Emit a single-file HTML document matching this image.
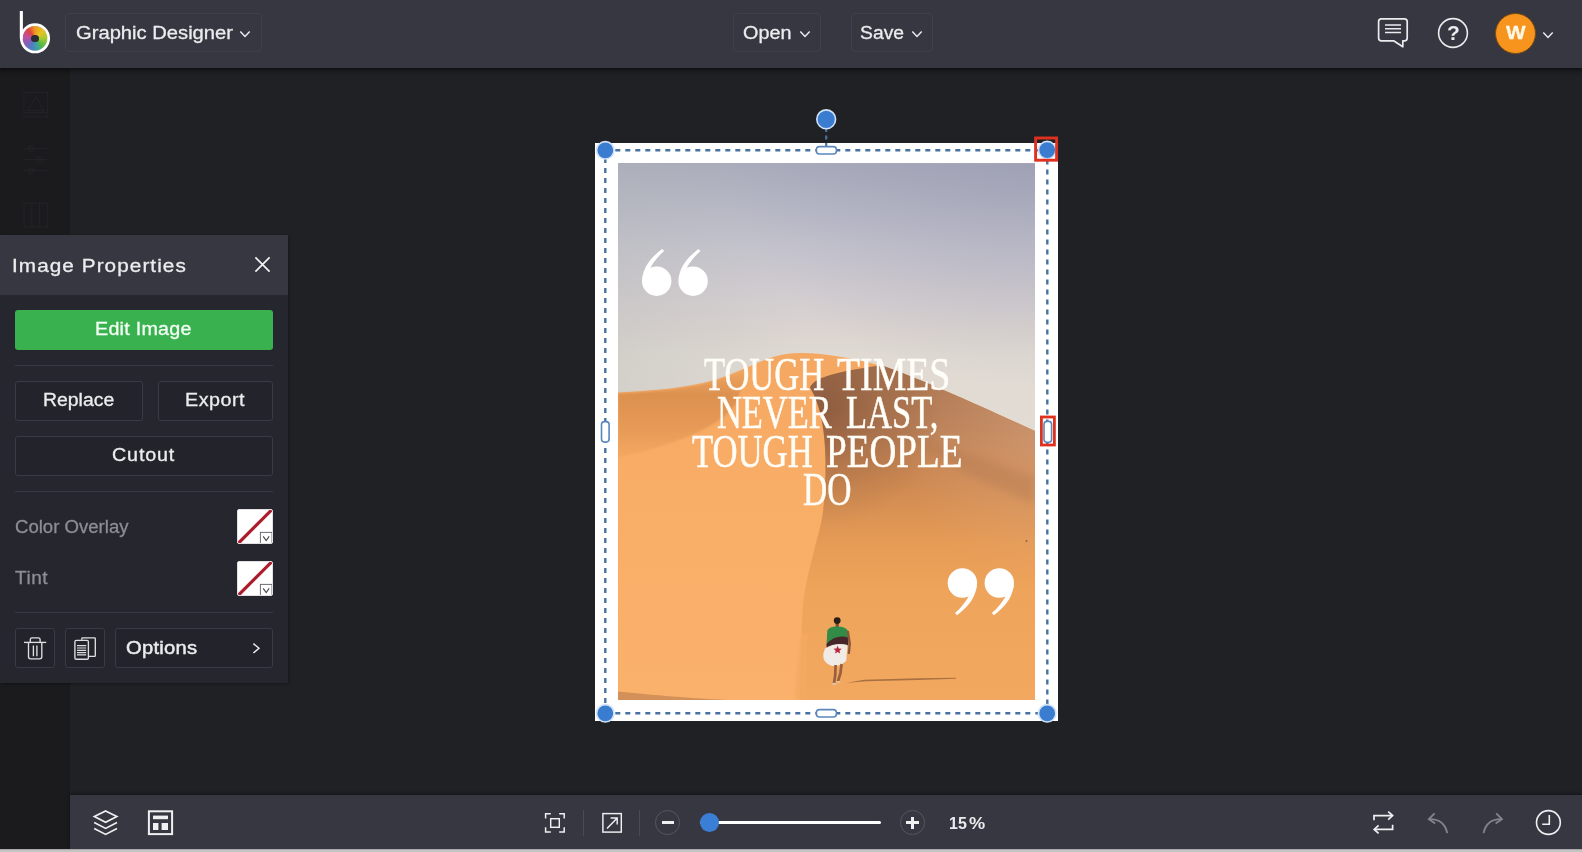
<!DOCTYPE html>
<html>
<head>
<meta charset="utf-8">
<title>Graphic Designer</title>
<style>
*{box-sizing:border-box;margin:0;padding:0}
html,body{width:1582px;height:852px;overflow:hidden;background:#202125;font-family:"Liberation Sans",sans-serif;}
.abs{position:absolute}
#header{position:absolute;left:0;top:0;width:1582px;height:68px;background:#373741;box-shadow:0 1px 5px 1px rgba(8,8,14,.85);z-index:5}
#sidebar{position:absolute;left:0;top:68px;width:70px;height:781px;background:#1b1b1d;z-index:1}
#toolbar{position:absolute;left:70px;top:795px;width:1512px;height:54px;background:#373741;z-index:4;box-shadow:0 -1px 3px rgba(10,10,14,.6)}
#strip{position:absolute;left:0;top:849px;width:1582px;height:3px;background:linear-gradient(#9c9ca0,#c2c2c2 45%,#c6c6c6);z-index:6}
.hbtn{position:absolute;top:13px;height:39px;border:1px solid #40404b;border-radius:4px;background:#373741}
.t{position:absolute;white-space:pre;color:#ececef;transform-origin:0 50%;line-height:1;-webkit-text-stroke:.3px}
#panel{position:absolute;left:0;top:235px;width:288px;height:448px;background:#25262e;z-index:3;box-shadow:1px 1px 3px rgba(0,0,0,.3)}
#phead{position:absolute;left:0;top:0;width:288px;height:60px;background:#373741}
.pbtn{position:absolute;border:1px solid #3a3a45;border-radius:3px;background:#23242b}
.hr{position:absolute;left:15px;width:258px;height:1px;background:#383944}
.sw{position:absolute;left:237.3px;width:35.4px;height:35.4px;background:#fff;border:1px solid #e4dfe2;border-radius:2px;overflow:hidden}
</style>
</head>
<body>
<div id="sidebar">
<svg class="abs" style="left:0;top:0" width="70" height="180" viewBox="0 68 70 180" fill="none" stroke="#222226" stroke-width="1.2">
<rect x="24" y="92.4" width="23.4" height="24.4"/><path d="M24 112.6 H47.4 M27.6 110.5 L35.7 97 L43.8 110.5 Z"/>
<path d="M24 148.5 H47.4 M24 159.5 H47.4 M24 170.5 H47.4"/><circle cx="31" cy="148.5" r="2.6"/><circle cx="39.5" cy="159.5" r="2.6"/><circle cx="31" cy="170.5" r="2.6"/>
<rect x="24" y="203.2" width="23.4" height="23.6"/><path d="M31.8 203.2 V226.8 M39.6 203.2 V226.8"/>
</svg></div>
<div id="header">
<!-- logo -->
<div class="abs" style="left:22.4px;top:25.6px;width:25.2px;height:25.2px;border-radius:50%;background:conic-gradient(from 0deg,#ee9a22 0deg,#e6c422 45deg,#a5c92f 90deg,#56b848 135deg,#3f9fa8 170deg,#4c7fc4 200deg,#8a5cb8 245deg,#c44f9a 285deg,#e0453c 325deg,#ee9a22 360deg)"></div>
<div class="abs" style="left:31.3px;top:35px;width:7.4px;height:7.4px;border-radius:50%;background:#2c2c33"></div>
<svg class="abs" style="left:0;top:0" width="70" height="68" viewBox="0 0 70 68"><circle cx="35" cy="38.3" r="13.7" fill="none" stroke="#fff" stroke-width="2.7"/><path d="M21.35 11 V38.5" stroke="#fff" stroke-width="3.1" fill="none"/></svg>
<!-- Graphic Designer -->
<div class="hbtn" style="left:65px;width:197px"></div>
<span class="t" id="tGD" style="left:76.0px;top:24.2px;font-size:18.58px;transform:scaleX(1.086)">Graphic Designer</span>
<svg class="abs" style="left:239px;top:29px" width="12" height="9" viewBox="0 0 12 9"><path d="M1.3 2.4 L6 7.4 L10.7 2.4" fill="none" stroke="#ececef" stroke-width="1.45"/></svg>
<!-- Open -->
<div class="hbtn" style="left:732.5px;width:88px"></div>
<span class="t" id="tOpen" style="left:743.1px;top:24.2px;font-size:18.58px;transform:scaleX(1.065)">Open</span>
<svg class="abs" style="left:798.5px;top:29px" width="12" height="9" viewBox="0 0 12 9"><path d="M1.3 2.4 L6 7.4 L10.7 2.4" fill="none" stroke="#ececef" stroke-width="1.45"/></svg>
<!-- Save -->
<div class="hbtn" style="left:850.5px;width:82px"></div>
<span class="t" id="tSave" style="left:860.3px;top:24.2px;font-size:18.58px;transform:scaleX(1.04)">Save</span>
<svg class="abs" style="left:911px;top:29px" width="12" height="9" viewBox="0 0 12 9"><path d="M1.3 2.4 L6 7.4 L10.7 2.4" fill="none" stroke="#ececef" stroke-width="1.45"/></svg>
<!-- chat icon -->
<svg class="abs" style="left:1374px;top:14px" width="40" height="38" viewBox="0 0 40 38"><path d="M7.4 4.8 H30.4 Q33.2 4.8 33.2 7.6 V24 Q33.2 26.8 30.4 26.8 H28.8 V32.8 L19.6 26.8 H7.4 Q4.6 26.8 4.6 24 V7.6 Q4.6 4.8 7.4 4.8 Z" fill="none" stroke="#ececef" stroke-width="1.7" stroke-linejoin="round"/><path d="M11 10.9 H27 M11 14.7 H27 M11 18.4 H27" stroke="#ececef" stroke-width="1.5" fill="none"/></svg>
<!-- help -->
<svg class="abs" style="left:1436px;top:16px" width="34" height="34" viewBox="0 0 34 34"><circle cx="17" cy="17" r="14.4" fill="none" stroke="#ececef" stroke-width="1.6"/></svg>
<span class="t" style="left:1447.1px;top:22.9px;font-size:20.5px;font-weight:700;-webkit-text-stroke:0;transform:scaleX(1.02)">?</span>
<!-- avatar -->
<div class="abs" style="left:1495.3px;top:12.6px;width:41.2px;height:41.2px;border-radius:50%;background:#f7941d;border:1.5px solid #7a4a12"></div>
<span class="t" style="left:1505.9px;top:24.3px;font-size:18.2px;font-weight:700;color:#fff8e8;transform:scaleX(1.14)">W</span>
<svg class="abs" style="left:1542px;top:29.6px" width="12" height="9" viewBox="0 0 12 9"><path d="M1.3 2.4 L6 7.4 L10.7 2.4" fill="none" stroke="#ececef" stroke-width="1.45"/></svg>
</div>
<div id="panel"><div id="phead"></div>
<span class="t" style="left:12.4px;top:22.2px;font-size:18.02px;letter-spacing:0.93px;transform:scaleX(1.150)">Image Properties</span>
<svg class="abs" style="left:253px;top:20px" width="19" height="19" viewBox="0 0 19 19"><path d="M2.4 2.4 L16.6 16.6 M16.6 2.4 L2.4 16.6" stroke="#f2f2f4" stroke-width="1.7" fill="none"/></svg>
<div class="abs" style="left:15px;top:75px;width:258px;height:40px;border-radius:3px;background:#3ab14f"></div>
<span class="t" style="left:94.9px;top:86.3px;font-size:17.6px;letter-spacing:0.22px;transform:scaleX(1.120);color:#f3fff4">Edit Image</span>
<div class="hr" style="top:130px"></div>
<div class="pbtn" style="left:15px;top:146px;width:128px;height:40px"></div>
<span class="t" style="left:42.6px;top:156.5px;font-size:17.6px;letter-spacing:0px;transform:scaleX(1.103)">Replace</span>
<div class="pbtn" style="left:158px;top:146px;width:115px;height:40px"></div>
<span class="t" style="left:184.9px;top:156.5px;font-size:17.6px;letter-spacing:0.47px;transform:scaleX(1.120)">Export</span>
<div class="pbtn" style="left:15px;top:201px;width:258px;height:40px"></div>
<span class="t" style="left:112.3px;top:211.5px;font-size:17.6px;letter-spacing:0.76px;transform:scaleX(1.120)">Cutout</span>
<div class="hr" style="top:256px"></div>
<span class="t" style="left:14.7px;top:282.9px;font-size:18.02px;transform:scaleX(1.031);color:#8d8d93">Color Overlay</span>
<div class="sw" style="top:273.8px"><svg class="abs" style="left:-1px;top:-1px" width="36" height="36" viewBox="0 0 36 36"><path d="M0 35.6 L35.6 0" stroke="#ab1d2d" stroke-width="3.2"/><rect x="23.4" y="23.4" width="11.6" height="11.6" fill="#fff" stroke="#6a6e74" stroke-width="1"/><path d="M26.2 27.4 L29.2 31.6 L32.2 27.4" fill="none" stroke="#444" stroke-width="1.1"/></svg></div>
<span class="t" style="left:14.7px;top:335.4px;font-size:17.6px;letter-spacing:0.47px;transform:scaleX(1.080);color:#8d8d93">Tint</span>
<div class="sw" style="top:325.6px"><svg class="abs" style="left:-1px;top:-1px" width="36" height="36" viewBox="0 0 36 36"><path d="M0 35.6 L35.6 0" stroke="#ab1d2d" stroke-width="3.2"/><rect x="23.4" y="23.4" width="11.6" height="11.6" fill="#fff" stroke="#6a6e74" stroke-width="1"/><path d="M26.2 27.4 L29.2 31.6 L32.2 27.4" fill="none" stroke="#444" stroke-width="1.1"/></svg></div>
<div class="hr" style="top:377px"></div>
<div class="pbtn" style="left:15px;top:393px;width:40px;height:40px"></div>
<div class="pbtn" style="left:65px;top:393px;width:40px;height:40px"></div>
<div class="pbtn" style="left:115px;top:393px;width:158px;height:40px"></div>
<span class="t" style="left:125.7px;top:403.7px;font-size:18.02px;letter-spacing:0.22px;transform:scaleX(1.120);-webkit-text-stroke:.45px">Options</span>
<svg class="abs" style="left:249px;top:406px" width="14" height="14" viewBox="0 0 14 14"><path d="M4.4 2.6 L10 7.3 L4.4 12" fill="none" stroke="#ececef" stroke-width="1.45"/></svg>
<!-- trash -->
<svg class="abs" style="left:22px;top:400px" width="26" height="26" viewBox="0 0 26 26" fill="none" stroke="#dedee2" stroke-width="1.35"><path d="M2 7.4 H24.2"/><path d="M8.3 7.2 V4.6 Q8.3 2.9 10 2.9 H16.4 Q18.1 2.9 18.1 4.6 V7.2"/><path d="M6.5 7.6 V21.8 Q6.5 23.9 8.6 23.9 H17.7 Q19.8 23.9 19.8 21.8 V7.6"/><path d="M11.4 10.6 V21.2 M14.9 10.6 V21.2"/></svg>
<!-- copy -->
<svg class="abs" style="left:72px;top:400px" width="26" height="26" viewBox="0 0 26 26" fill="none" stroke="#dedee2" stroke-width="1.35"><path d="M9.8 4.8 V3.6 Q9.8 2.9 10.5 2.9 H22.6 Q23.3 2.9 23.3 3.6 V20.7 Q23.3 21.4 22.6 21.4 H16.6"/><rect x="2.9" y="5.4" width="13.5" height="18.8" rx="1.3" fill="#23242b"/><path d="M5 10.7 H14.2 M5 13 H14.2 M5 15.3 H14.2 M5 17.6 H14.2 M5 19.8 H14.2" stroke-width="1.2"/></svg>
</div>
<!-- canvas -->
<div id="frame" class="abs" style="left:595px;top:143px;width:463px;height:577.6px;background:#fff"></div>
<svg id="photo" class="abs" style="left:618px;top:163px" width="417" height="537" viewBox="0 -0.5 417 537">
<defs>
<linearGradient id="sky" x1="0" y1="0" x2="0" y2="1">
<stop offset="0" stop-color="#a9abbc"/><stop offset="0.075" stop-color="#b5b7c5"/><stop offset="0.155" stop-color="#c5c4ce"/><stop offset="0.26" stop-color="#d5cfd1"/><stop offset="0.31" stop-color="#dbd4d0"/><stop offset="0.36" stop-color="#e0dad3"/><stop offset="0.5" stop-color="#e3dcd4"/>
</linearGradient>
<radialGradient id="vigR" cx="1" cy="0" r="0.75"><stop offset="0" stop-color="#8e8fa8" stop-opacity=".38"/><stop offset="1" stop-color="#8e8fa8" stop-opacity="0"/></radialGradient>
<linearGradient id="vigL" x1="0" y1="0" x2="1" y2="0"><stop offset="0" stop-color="#b4b6b4" stop-opacity=".3"/><stop offset="0.45" stop-color="#b4b6b4" stop-opacity="0"/></linearGradient>
<linearGradient id="lit" x1="0" y1="0" x2="0" y2="1"><stop offset="0" stop-color="#f4a761"/><stop offset="0.4" stop-color="#f9ae67"/><stop offset="1" stop-color="#fab16b"/></linearGradient>
<linearGradient id="far" x1="0" y1="0" x2="0" y2="1"><stop offset="0" stop-color="#f0a761"/><stop offset="0.3" stop-color="#dc9150"/><stop offset="0.7" stop-color="#e79b57"/><stop offset="1" stop-color="#f4a862"/></linearGradient>
<linearGradient id="shade" gradientUnits="userSpaceOnUse" x1="0" y1="200" x2="0" y2="536"><stop offset="0" stop-color="#a87450"/><stop offset="0.18" stop-color="#b67d55"/><stop offset="0.36" stop-color="#cf8a52"/><stop offset="0.54" stop-color="#e79c56"/><stop offset="0.68" stop-color="#efa45b"/><stop offset="1" stop-color="#f2a85f"/></linearGradient>
<radialGradient id="shadeD" gradientUnits="userSpaceOnUse" cx="205" cy="245" r="120"><stop offset="0" stop-color="#70432f" stop-opacity=".55"/><stop offset="0.5" stop-color="#70432f" stop-opacity=".2"/><stop offset="1" stop-color="#70432f" stop-opacity="0"/></radialGradient>
<radialGradient id="shadeL" gradientUnits="userSpaceOnUse" cx="430" cy="265" r="150"><stop offset="0" stop-color="#e0aa84" stop-opacity=".5"/><stop offset="1" stop-color="#e0aa84" stop-opacity="0"/></radialGradient>
<linearGradient id="shadeX" x1="0" y1="0" x2="1" y2="0"><stop offset="0" stop-color="#7d5038" stop-opacity=".45"/><stop offset="0.35" stop-color="#7d5038" stop-opacity=".08"/><stop offset="1" stop-color="#d99a6a" stop-opacity=".25"/></linearGradient>
<linearGradient id="fadeB" x1="0" y1="0" x2="0" y2="1"><stop offset="0" stop-color="#f9af69" stop-opacity="0"/><stop offset="1" stop-color="#f7ab62" stop-opacity="1"/></linearGradient>
<filter id="b05"><feGaussianBlur stdDeviation="0.7"/></filter><filter id="b1"><feGaussianBlur stdDeviation="1.2"/></filter>
<filter id="b3"><feGaussianBlur stdDeviation="4"/></filter>
<g id="q6"><circle cx="0" cy="0" r="14.7"/><path d="M5.4 -32.3 L7.4 -30.1 C2 -25.5 -2.5 -20 -5.6 -14.6 L-8 -10 L-14.5 -2 C-13.5 -12 -9 -21 5.4 -32.3 Z"/></g>
</defs>
<rect y="-0.5" width="417" height="537" fill="url(#sky)"/>
<rect width="417" height="300" fill="url(#vigR)"/>
<rect width="417" height="300" fill="url(#vigL)"/>
<!-- whole dune base -->
<path d="M0 229 C40 227 70 224 95 217 C125 208 145 194 168 190.5 C195 187 230 194 263 202 C300 214 370 246 417 267.5 V536.5 H0 Z" fill="url(#lit)"/>
<!-- far left darker band -->
<path d="M0 230 C40 228 70 225 95 218 C110 214 120 209 130 205 L118 240 C100 268 40 285 0 294 Z" fill="url(#far)" filter="url(#b1)"/>
<!-- shaded side -->
<path id="shp" d="M192 224 C197 212.5 225 207.5 263.4 201.8 C300 214 370 246 417 267.5 V536.5 H182 C182 510 183 470 185 440 C189 410 197 385 203 360 C207 340 207.5 320 207.5 300 C207.5 270 203 242 192 224 Z" fill="url(#shade)"/>
<path d="M192 224 C197 212.5 225 207.5 263.4 201.8 C300 214 370 246 417 267.5 V536.5 H182 C182 510 183 470 185 440 C189 410 197 385 203 360 C207 340 207.5 320 207.5 300 C207.5 270 203 242 192 224 Z" fill="url(#shadeD)"/>
<path d="M192 224 C197 212.5 225 207.5 263.4 201.8 C300 214 370 246 417 267.5 V536.5 H182 C182 510 183 470 185 440 C189 410 197 385 203 360 C207 340 207.5 320 207.5 300 C207.5 270 203 242 192 224 Z" fill="url(#shadeL)"/>
<!-- diagonal darker band on right -->
<path d="M290 272 C335 284 380 300 417 313 V340 C380 326 335 306 290 272 Z" fill="#a8724c" opacity=".32" filter="url(#b3)"/>
<!-- soften lower ridge -->
<path d="M177 536.5 C178 510 180 490 183 470 L190 470 C188 495 188 515 189 536.5 Z" fill="#f5aa62" opacity=".8" filter="url(#b1)"/>
<!-- bottom left shadow -->
<path d="M0 528 C20 530 60 534 110 536.5 H0 Z" fill="#c98a55" opacity=".8"/>
<!-- person shadow -->
<path d="M228 519.4 L246 516.2 L300 514.8 L338 514.2 L338 515.2 L300 516.4 L248 517.8 Z" fill="#7a4c30" opacity=".6" filter="url(#b05)"/>
<!-- person -->
<g filter="url(#b05)">
<path d="M217.6 459 H220.8 V465 H217.6 Z" fill="#7a4c33"/>
<circle cx="219.2" cy="457.1" r="3.4" fill="#2b1e19"/>
<path d="M209.3 467 Q211.5 462.8 219 463 Q226.8 462.8 229.8 467 L230.4 478 L208.6 481 Z" fill="#318c47"/>
<path d="M208.4 480.5 Q218 470.5 230.2 474 L230.4 482 Q219 478.5 209 486.5 Z" fill="#47272a"/>
<path d="M207 485 Q218 478.4 229.4 481.6 L228.2 497.5 Q222 503.2 214 502.4 Q204 499.5 205.4 490 Z" fill="#f1ebe7"/>
<path d="M219.6 482.2 l1.2 2.7 2.9 .3 -2.2 2 .7 2.9 -2.6 -1.5 -2.6 1.5 .7 -2.9 -2.2 -2 2.9 -.3 z" fill="#b8283c"/>
<path d="M229.8 467.5 L231.8 480 L230.8 490.5" stroke="#8c5638" stroke-width="2.3" fill="none"/>
<path d="M217.6 501.5 L217.2 512 L216 519.6 M223.6 500.5 L222.4 510 L220 517.6" stroke="#98603f" stroke-width="2.7" fill="none"/>
<ellipse cx="216.4" cy="520.4" rx="2.2" ry="1.1" fill="#e6c4a2"/><ellipse cx="220.6" cy="518.4" rx="1.8" ry="1" fill="#e6c4a2"/>
</g>
<circle cx="408.5" cy="377.5" r="1" fill="#6b4a3a" opacity=".7"/>
<!-- quote marks -->
<g fill="#fff">
<use href="#q6" transform="translate(38.7 117.7)"/>
<use href="#q6" transform="translate(75.1 117.7)"/>
<use href="#q6" transform="translate(344.4 419.5) rotate(180)"/>
<use href="#q6" transform="translate(381.3 419.5) rotate(180)"/>
</g>
</svg>
<!-- quote text -->
<div id="qt" class="abs" style="left:618px;top:163.5px;width:417px;height:536.5px;overflow:hidden;color:#fffdf8;font-family:'Liberation Serif',serif;font-size:46px;line-height:1;white-space:pre;-webkit-text-stroke:.5px #fffdf8">
<span class="abs" style="left:85.6px;top:188.9px;transform-origin:0 0;transform:scaleX(0.7497)">TOUGH</span>
<span class="abs" style="left:219.2px;top:188.9px;transform-origin:0 0;transform:scaleX(0.8213)">TIMES</span>
<span class="abs" style="left:98.65px;top:226.3px;transform-origin:0 0;transform:scaleX(0.7477)">NEVER</span>
<span class="abs" style="left:228.35px;top:226.3px;transform-origin:0 0;transform:scaleX(0.7508)">LAST,</span>
<span class="abs" style="left:74.2px;top:265.3px;transform-origin:0 0;transform:scaleX(0.7535)">TOUGH</span>
<span class="abs" style="left:207.59px;top:265.3px;transform-origin:0 0;transform:scaleX(0.8084)">PEOPLE</span>
<span class="abs" style="left:185.17px;top:303.7px;transform-origin:0 0;transform:scaleX(0.7297)">DO</span>
</div>
<!-- selection -->
<svg id="sel" class="abs" style="left:580px;top:100px;z-index:2" width="500" height="640" viewBox="580 100 500 640">
<g fill="none" stroke="#47729f" stroke-width="2.4" stroke-dasharray="5 5">
<path d="M605.3 150.3 H1047.3"/><path d="M605.3 713.3 H1047.3"/>
<path d="M605.3 150.3 V713.3" stroke-dashoffset="2.3"/><path d="M1047.3 150.3 V713.3" stroke-dashoffset="0.8"/>
</g>
<path d="M826.2 128 V147" stroke="#47729f" stroke-width="2.2" stroke-dasharray="4 3.5" fill="none"/>
<g fill="#3a7dd0" stroke="#d3e3f7" stroke-width="1.6">
<circle cx="826.2" cy="119.3" r="9.4"/>
<circle cx="605.3" cy="150.3" r="8.7"/>
<circle cx="1047.2" cy="150.1" r="8.7"/>
<circle cx="605.3" cy="713.3" r="8.7"/>
<circle cx="1047.2" cy="713.3" r="8.7"/>
</g>
<g fill="#fff" stroke="#5a88bc" stroke-width="1.6">
<rect x="816.4" y="146.6" width="20" height="7.4" rx="3"/>
<rect x="816.4" y="709.6" width="20" height="7.4" rx="3"/>
<rect x="601.5" y="421.6" width="7.6" height="20.4" rx="3"/>
<rect x="1044" y="421.4" width="7.6" height="20.8" rx="3"/>
</g>
<rect x="1035.6" y="138" width="21" height="22.2" fill="none" stroke="#e0311f" stroke-width="2.9"/>
<rect x="1041.4" y="417" width="13" height="28" fill="none" stroke="#e0311f" stroke-width="2.8"/>
</svg>
<div id="toolbar">
<!-- layers -->
<svg class="abs" style="left:21px;top:13px" width="30" height="30" viewBox="0 0 30 30"><path d="M14.6 3 L25.8 8.6 L14.6 14.2 L3.4 8.6 Z" fill="none" stroke="#f0f0f3" stroke-width="1.7" stroke-linejoin="miter"/><path d="M3.2 14.6 L14.6 20.4 L26 14.6" fill="none" stroke="#f0f0f3" stroke-width="1.7"/><path d="M3.2 20.6 L14.6 26.4 L26 20.6" fill="none" stroke="#f0f0f3" stroke-width="1.7"/></svg>
<!-- layout -->
<svg class="abs" style="left:76px;top:13px" width="30" height="30" viewBox="0 0 30 30"><rect x="2.9" y="3.3" width="23.2" height="22.8" fill="none" stroke="#f0f0f3" stroke-width="2"/><rect x="7" y="7.6" width="15" height="3.6" fill="#f0f0f3"/><rect x="7" y="15" width="5.4" height="7" fill="#f0f0f3"/><rect x="15.6" y="15" width="6.4" height="7" fill="#f0f0f3"/></svg>
<!-- fit -->
<svg class="abs" style="left:472px;top:15px" width="26" height="26" viewBox="0 0 26 26"><path d="M3.6 8.6 V3.7 H8.8 M17.2 3.7 H22.2 V8.6 M22.2 17.2 V22.1 H17.2 M8.8 22.1 H3.6 V17.2" fill="none" stroke="#f0f0f3" stroke-width="1.5"/><rect x="8.7" y="8.7" width="8.6" height="8.6" fill="none" stroke="#f0f0f3" stroke-width="1.45"/></svg>
<div class="abs" style="left:513px;top:15px;width:1px;height:26px;background:#4a4a55"></div>
<!-- expand -->
<svg class="abs" style="left:529px;top:15px" width="26" height="26" viewBox="0 0 26 26"><rect x="3.9" y="3.6" width="18.4" height="18.5" fill="none" stroke="#f0f0f3" stroke-width="1.45"/><path d="M8 18.4 L18 8.2 M11.6 8 H18.2 V14.6" fill="none" stroke="#f0f0f3" stroke-width="1.45"/></svg>
<div class="abs" style="left:569px;top:15px;width:1px;height:26px;background:#4a4a55"></div>
<!-- minus -->
<div class="abs" style="left:585.3px;top:15.4px;width:24.6px;height:24.6px;border-radius:50%;border:1px solid #565661"></div>
<div class="abs" style="left:591.6px;top:26.3px;width:12.4px;height:3px;background:#f0f0f3"></div>
<!-- slider -->
<div class="abs" style="left:630px;top:26.2px;width:180.5px;height:3px;background:#fff;border-radius:1.5px"></div>
<div class="abs" style="left:630.2px;top:18.2px;width:19px;height:19px;border-radius:50%;background:#3a7fd5"></div>
<!-- plus -->
<div class="abs" style="left:830.2px;top:15.4px;width:24.6px;height:24.6px;border-radius:50%;border:1px solid #565661"></div>
<div class="abs" style="left:836.3px;top:26.3px;width:12.4px;height:3px;background:#f0f0f3"></div>
<div class="abs" style="left:841.1px;top:21.5px;width:3px;height:12.4px;background:#f0f0f3"></div>
<span class="t" style="left:878.7px;top:19.5px;font-size:17px;font-weight:700;-webkit-text-stroke:0;transform:scaleX(.94)">15</span><span class="t" style="left:899.2px;top:19.5px;font-size:17px;font-weight:700;-webkit-text-stroke:0;transform:scaleX(1.07)">%</span>
<!-- repeat -->
<svg class="abs" style="left:1300px;top:13px" width="28" height="30" viewBox="0 0 28 30"><path d="M4 12.2 V7.6 H22.4" fill="none" stroke="#f0f0f3" stroke-width="1.7"/><path d="M18.2 3.6 L22.6 7.6 L18.2 11.6" fill="none" stroke="#f0f0f3" stroke-width="1.7"/><path d="M22.6 16.8 V21.4 H4.4" fill="none" stroke="#f0f0f3" stroke-width="1.7"/><path d="M8.6 17.4 L4.2 21.4 L8.6 25.4" fill="none" stroke="#f0f0f3" stroke-width="1.7"/></svg>
<!-- undo -->
<svg class="abs" style="left:1355px;top:13px" width="28" height="30" viewBox="0 0 28 30"><path d="M4.2 11.2 Q19.4 11 22.2 25.2" fill="none" stroke="#84848c" stroke-width="1.8"/><path d="M9.6 5.4 L3.8 11.2 L10.2 15.6" fill="none" stroke="#84848c" stroke-width="1.8"/></svg>
<!-- redo -->
<svg class="abs" style="left:1407.9px;top:13px" width="28" height="30" viewBox="0 0 28 30"><path d="M23.6 11.2 Q8.4 11 5.6 25.2" fill="none" stroke="#84848c" stroke-width="1.8"/><path d="M18.2 5.4 L24 11.2 L17.6 15.6" fill="none" stroke="#84848c" stroke-width="1.8"/></svg>
<!-- clock -->
<svg class="abs" style="left:1464px;top:13px" width="30" height="30" viewBox="0 0 30 30"><circle cx="14.4" cy="14.5" r="11.9" fill="none" stroke="#f0f0f3" stroke-width="1.6"/><path d="M15.3 6.9 V16.3 H8.2" fill="none" stroke="#f0f0f3" stroke-width="1.6"/></svg>
</div>
<div id="strip"></div>
</body>
</html>
